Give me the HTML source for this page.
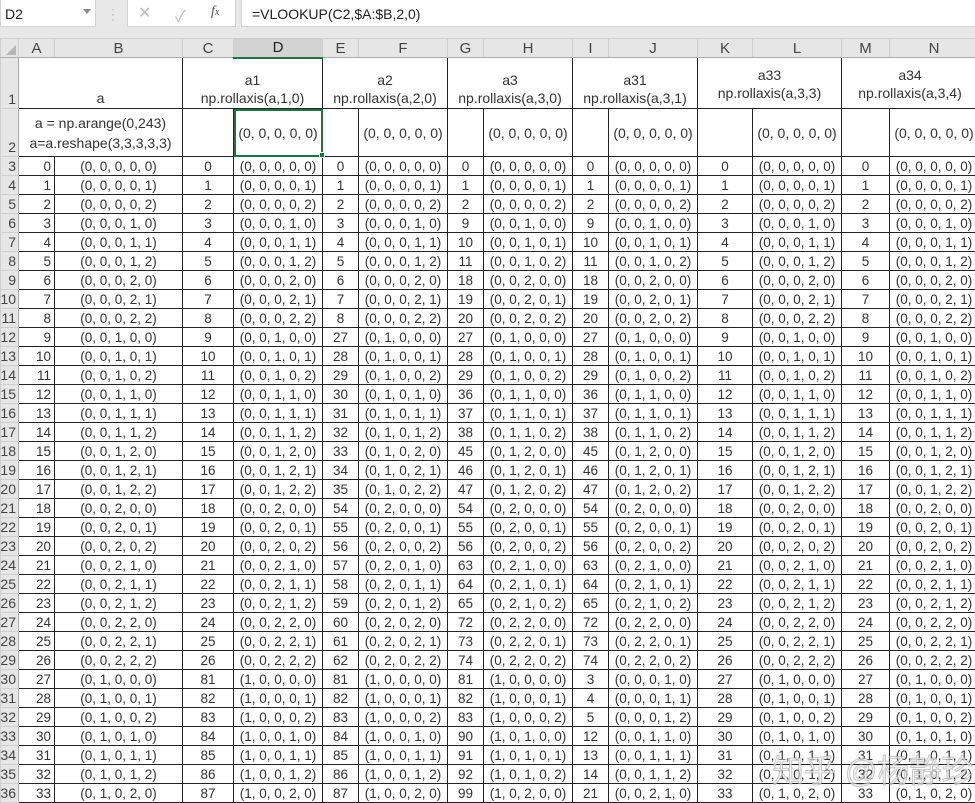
<!DOCTYPE html>
<html><head><meta charset="utf-8"><style>
*{margin:0;padding:0;box-sizing:border-box}
body{width:975px;height:798px;overflow:hidden;background:#e8e8e8;font-family:"Liberation Sans","Noto Sans CJK SC",sans-serif;color:#333;position:relative}
.bar{position:absolute;top:0;left:0;width:975px;height:38px;background:#e8e8e8}
.box{position:absolute;top:0;height:27px;background:#fff;border:1px solid #d4d4d4;border-top:none}
.nb{left:0;width:96px}
.ib{left:127px;width:109px}
.fb{left:241px;width:740px}
.t{position:absolute;font-size:14px;color:#222;top:6px}
table{position:absolute;top:38px;left:0;border-collapse:collapse;table-layout:fixed;width:978px;background:#fff}
td,th{font-size:13.5px;font-weight:normal;white-space:nowrap;overflow:hidden;text-align:center;height:19px;line-height:17px;border:1px solid #222;padding:0}
tr.h th{background:#e6e6e6;border:1px solid #cfcfcf;border-bottom:1px solid #ababab;color:#444;font-size:15px;height:19px}
tr.h th.sel{background:#d3d3d3;border-bottom:2px solid #217346;color:#222}
th.rh{background:#e6e6e6;border:1px solid #cfcfcf;border-right:1px solid #ababab;color:#444;font-size:14px;padding:0}
th.rh span{display:flex;justify-content:flex-end;align-items:flex-end;height:100%;padding-right:2px;overflow:hidden}
td:nth-child(2){text-align:right;padding-right:3px}
tr.r1 td{height:51px;vertical-align:bottom;line-height:18px;padding-bottom:1px;font-size:14px}
tr.r2 td{height:48px;font-size:14px;line-height:20px}
td.d2{outline:2px solid #217346;outline-offset:-2px}
.wm{position:absolute;left:772px;top:746px;font-size:32px;color:rgba(240,240,240,0.7);-webkit-text-stroke:1px rgba(150,150,150,0.5);letter-spacing:0;white-space:nowrap}
</style></head><body>
<div class="bar">
<div class="box nb"><span class="t" style="left:4px">D2</span><span style="position:absolute;left:82px;top:9px;width:0;height:0;border-left:4px solid transparent;border-right:4px solid transparent;border-top:5px solid #888"></span></div>
<span style="position:absolute;left:111px;top:7px;color:#aaa;font-size:12px;line-height:5px">·<br>·<br>·</span>
<div class="box ib"><span class="t" style="left:10px;color:#bbb;font-size:16px;top:3px">✕</span><span class="t" style="left:47px;color:#bbb;font-size:16px;top:3px">✓</span><span class="t" style="left:83px;font-family:'Liberation Serif',serif;font-style:italic;color:#555;top:4px">f<small style="font-size:10px">x</small></span></div>
<div class="box fb"><span class="t" style="left:10px">=VLOOKUP(C2,$A:$B,2,0)</span></div>
</div>
<table>
<colgroup><col style="width:18px"><col style="width:36px"><col style="width:128px"><col style="width:51px"><col style="width:89px"><col style="width:36px"><col style="width:89px"><col style="width:36px"><col style="width:89px"><col style="width:36px"><col style="width:89px"><col style="width:55px"><col style="width:89px"><col style="width:48px"><col style="width:89px"></colgroup>
<tr class="h"><th style="position:relative"><span style="position:absolute;right:2px;bottom:2px;width:0;height:0;border-left:10px solid transparent;border-bottom:10px solid #b5b5b5"></span></th><th>A</th><th>B</th><th>C</th><th class="sel">D</th><th>E</th><th>F</th><th>G</th><th>H</th><th>I</th><th>J</th><th>K</th><th>L</th><th>M</th><th>N</th></tr>
<tr class="r1"><th class="rh"><span>1</span></th><td colspan="2" style="text-align:center;padding-right:0">a</td><td colspan="2">a1<br>np.rollaxis(a,1,0)</td><td colspan="2">a2<br>np.rollaxis(a,2,0)</td><td colspan="2">a3<br>np.rollaxis(a,3,0)</td><td colspan="2">a31<br>np.rollaxis(a,3,1)</td><td colspan="2" style="padding-bottom:6px">a33<br>np.rollaxis(a,3,3)</td><td colspan="2" style="padding-bottom:6px">a34<br>np.rollaxis(a,3,4)</td></tr>
<tr class="r2"><th class="rh"><span>2</span></th><td colspan="2" style="text-align:center;padding-right:0">a = np.arange(0,243)<br>a=a.reshape(3,3,3,3,3)</td><td></td><td class="d2">(0, 0, 0, 0, 0)</td><td></td><td>(0, 0, 0, 0, 0)</td><td></td><td>(0, 0, 0, 0, 0)</td><td></td><td>(0, 0, 0, 0, 0)</td><td></td><td>(0, 0, 0, 0, 0)</td><td></td><td>(0, 0, 0, 0, 0)</td></tr>
<tr><th class="rh"><span>3</span></th><td>0</td><td>(0, 0, 0, 0, 0)</td><td>0</td><td>(0, 0, 0, 0, 0)</td><td>0</td><td>(0, 0, 0, 0, 0)</td><td>0</td><td>(0, 0, 0, 0, 0)</td><td>0</td><td>(0, 0, 0, 0, 0)</td><td>0</td><td>(0, 0, 0, 0, 0)</td><td>0</td><td>(0, 0, 0, 0, 0)</td></tr>
<tr><th class="rh"><span>4</span></th><td>1</td><td>(0, 0, 0, 0, 1)</td><td>1</td><td>(0, 0, 0, 0, 1)</td><td>1</td><td>(0, 0, 0, 0, 1)</td><td>1</td><td>(0, 0, 0, 0, 1)</td><td>1</td><td>(0, 0, 0, 0, 1)</td><td>1</td><td>(0, 0, 0, 0, 1)</td><td>1</td><td>(0, 0, 0, 0, 1)</td></tr>
<tr><th class="rh"><span>5</span></th><td>2</td><td>(0, 0, 0, 0, 2)</td><td>2</td><td>(0, 0, 0, 0, 2)</td><td>2</td><td>(0, 0, 0, 0, 2)</td><td>2</td><td>(0, 0, 0, 0, 2)</td><td>2</td><td>(0, 0, 0, 0, 2)</td><td>2</td><td>(0, 0, 0, 0, 2)</td><td>2</td><td>(0, 0, 0, 0, 2)</td></tr>
<tr><th class="rh"><span>6</span></th><td>3</td><td>(0, 0, 0, 1, 0)</td><td>3</td><td>(0, 0, 0, 1, 0)</td><td>3</td><td>(0, 0, 0, 1, 0)</td><td>9</td><td>(0, 0, 1, 0, 0)</td><td>9</td><td>(0, 0, 1, 0, 0)</td><td>3</td><td>(0, 0, 0, 1, 0)</td><td>3</td><td>(0, 0, 0, 1, 0)</td></tr>
<tr><th class="rh"><span>7</span></th><td>4</td><td>(0, 0, 0, 1, 1)</td><td>4</td><td>(0, 0, 0, 1, 1)</td><td>4</td><td>(0, 0, 0, 1, 1)</td><td>10</td><td>(0, 0, 1, 0, 1)</td><td>10</td><td>(0, 0, 1, 0, 1)</td><td>4</td><td>(0, 0, 0, 1, 1)</td><td>4</td><td>(0, 0, 0, 1, 1)</td></tr>
<tr><th class="rh"><span>8</span></th><td>5</td><td>(0, 0, 0, 1, 2)</td><td>5</td><td>(0, 0, 0, 1, 2)</td><td>5</td><td>(0, 0, 0, 1, 2)</td><td>11</td><td>(0, 0, 1, 0, 2)</td><td>11</td><td>(0, 0, 1, 0, 2)</td><td>5</td><td>(0, 0, 0, 1, 2)</td><td>5</td><td>(0, 0, 0, 1, 2)</td></tr>
<tr><th class="rh"><span>9</span></th><td>6</td><td>(0, 0, 0, 2, 0)</td><td>6</td><td>(0, 0, 0, 2, 0)</td><td>6</td><td>(0, 0, 0, 2, 0)</td><td>18</td><td>(0, 0, 2, 0, 0)</td><td>18</td><td>(0, 0, 2, 0, 0)</td><td>6</td><td>(0, 0, 0, 2, 0)</td><td>6</td><td>(0, 0, 0, 2, 0)</td></tr>
<tr><th class="rh"><span>10</span></th><td>7</td><td>(0, 0, 0, 2, 1)</td><td>7</td><td>(0, 0, 0, 2, 1)</td><td>7</td><td>(0, 0, 0, 2, 1)</td><td>19</td><td>(0, 0, 2, 0, 1)</td><td>19</td><td>(0, 0, 2, 0, 1)</td><td>7</td><td>(0, 0, 0, 2, 1)</td><td>7</td><td>(0, 0, 0, 2, 1)</td></tr>
<tr><th class="rh"><span>11</span></th><td>8</td><td>(0, 0, 0, 2, 2)</td><td>8</td><td>(0, 0, 0, 2, 2)</td><td>8</td><td>(0, 0, 0, 2, 2)</td><td>20</td><td>(0, 0, 2, 0, 2)</td><td>20</td><td>(0, 0, 2, 0, 2)</td><td>8</td><td>(0, 0, 0, 2, 2)</td><td>8</td><td>(0, 0, 0, 2, 2)</td></tr>
<tr><th class="rh"><span>12</span></th><td>9</td><td>(0, 0, 1, 0, 0)</td><td>9</td><td>(0, 0, 1, 0, 0)</td><td>27</td><td>(0, 1, 0, 0, 0)</td><td>27</td><td>(0, 1, 0, 0, 0)</td><td>27</td><td>(0, 1, 0, 0, 0)</td><td>9</td><td>(0, 0, 1, 0, 0)</td><td>9</td><td>(0, 0, 1, 0, 0)</td></tr>
<tr><th class="rh"><span>13</span></th><td>10</td><td>(0, 0, 1, 0, 1)</td><td>10</td><td>(0, 0, 1, 0, 1)</td><td>28</td><td>(0, 1, 0, 0, 1)</td><td>28</td><td>(0, 1, 0, 0, 1)</td><td>28</td><td>(0, 1, 0, 0, 1)</td><td>10</td><td>(0, 0, 1, 0, 1)</td><td>10</td><td>(0, 0, 1, 0, 1)</td></tr>
<tr><th class="rh"><span>14</span></th><td>11</td><td>(0, 0, 1, 0, 2)</td><td>11</td><td>(0, 0, 1, 0, 2)</td><td>29</td><td>(0, 1, 0, 0, 2)</td><td>29</td><td>(0, 1, 0, 0, 2)</td><td>29</td><td>(0, 1, 0, 0, 2)</td><td>11</td><td>(0, 0, 1, 0, 2)</td><td>11</td><td>(0, 0, 1, 0, 2)</td></tr>
<tr><th class="rh"><span>15</span></th><td>12</td><td>(0, 0, 1, 1, 0)</td><td>12</td><td>(0, 0, 1, 1, 0)</td><td>30</td><td>(0, 1, 0, 1, 0)</td><td>36</td><td>(0, 1, 1, 0, 0)</td><td>36</td><td>(0, 1, 1, 0, 0)</td><td>12</td><td>(0, 0, 1, 1, 0)</td><td>12</td><td>(0, 0, 1, 1, 0)</td></tr>
<tr><th class="rh"><span>16</span></th><td>13</td><td>(0, 0, 1, 1, 1)</td><td>13</td><td>(0, 0, 1, 1, 1)</td><td>31</td><td>(0, 1, 0, 1, 1)</td><td>37</td><td>(0, 1, 1, 0, 1)</td><td>37</td><td>(0, 1, 1, 0, 1)</td><td>13</td><td>(0, 0, 1, 1, 1)</td><td>13</td><td>(0, 0, 1, 1, 1)</td></tr>
<tr><th class="rh"><span>17</span></th><td>14</td><td>(0, 0, 1, 1, 2)</td><td>14</td><td>(0, 0, 1, 1, 2)</td><td>32</td><td>(0, 1, 0, 1, 2)</td><td>38</td><td>(0, 1, 1, 0, 2)</td><td>38</td><td>(0, 1, 1, 0, 2)</td><td>14</td><td>(0, 0, 1, 1, 2)</td><td>14</td><td>(0, 0, 1, 1, 2)</td></tr>
<tr><th class="rh"><span>18</span></th><td>15</td><td>(0, 0, 1, 2, 0)</td><td>15</td><td>(0, 0, 1, 2, 0)</td><td>33</td><td>(0, 1, 0, 2, 0)</td><td>45</td><td>(0, 1, 2, 0, 0)</td><td>45</td><td>(0, 1, 2, 0, 0)</td><td>15</td><td>(0, 0, 1, 2, 0)</td><td>15</td><td>(0, 0, 1, 2, 0)</td></tr>
<tr><th class="rh"><span>19</span></th><td>16</td><td>(0, 0, 1, 2, 1)</td><td>16</td><td>(0, 0, 1, 2, 1)</td><td>34</td><td>(0, 1, 0, 2, 1)</td><td>46</td><td>(0, 1, 2, 0, 1)</td><td>46</td><td>(0, 1, 2, 0, 1)</td><td>16</td><td>(0, 0, 1, 2, 1)</td><td>16</td><td>(0, 0, 1, 2, 1)</td></tr>
<tr><th class="rh"><span>20</span></th><td>17</td><td>(0, 0, 1, 2, 2)</td><td>17</td><td>(0, 0, 1, 2, 2)</td><td>35</td><td>(0, 1, 0, 2, 2)</td><td>47</td><td>(0, 1, 2, 0, 2)</td><td>47</td><td>(0, 1, 2, 0, 2)</td><td>17</td><td>(0, 0, 1, 2, 2)</td><td>17</td><td>(0, 0, 1, 2, 2)</td></tr>
<tr><th class="rh"><span>21</span></th><td>18</td><td>(0, 0, 2, 0, 0)</td><td>18</td><td>(0, 0, 2, 0, 0)</td><td>54</td><td>(0, 2, 0, 0, 0)</td><td>54</td><td>(0, 2, 0, 0, 0)</td><td>54</td><td>(0, 2, 0, 0, 0)</td><td>18</td><td>(0, 0, 2, 0, 0)</td><td>18</td><td>(0, 0, 2, 0, 0)</td></tr>
<tr><th class="rh"><span>22</span></th><td>19</td><td>(0, 0, 2, 0, 1)</td><td>19</td><td>(0, 0, 2, 0, 1)</td><td>55</td><td>(0, 2, 0, 0, 1)</td><td>55</td><td>(0, 2, 0, 0, 1)</td><td>55</td><td>(0, 2, 0, 0, 1)</td><td>19</td><td>(0, 0, 2, 0, 1)</td><td>19</td><td>(0, 0, 2, 0, 1)</td></tr>
<tr><th class="rh"><span>23</span></th><td>20</td><td>(0, 0, 2, 0, 2)</td><td>20</td><td>(0, 0, 2, 0, 2)</td><td>56</td><td>(0, 2, 0, 0, 2)</td><td>56</td><td>(0, 2, 0, 0, 2)</td><td>56</td><td>(0, 2, 0, 0, 2)</td><td>20</td><td>(0, 0, 2, 0, 2)</td><td>20</td><td>(0, 0, 2, 0, 2)</td></tr>
<tr><th class="rh"><span>24</span></th><td>21</td><td>(0, 0, 2, 1, 0)</td><td>21</td><td>(0, 0, 2, 1, 0)</td><td>57</td><td>(0, 2, 0, 1, 0)</td><td>63</td><td>(0, 2, 1, 0, 0)</td><td>63</td><td>(0, 2, 1, 0, 0)</td><td>21</td><td>(0, 0, 2, 1, 0)</td><td>21</td><td>(0, 0, 2, 1, 0)</td></tr>
<tr><th class="rh"><span>25</span></th><td>22</td><td>(0, 0, 2, 1, 1)</td><td>22</td><td>(0, 0, 2, 1, 1)</td><td>58</td><td>(0, 2, 0, 1, 1)</td><td>64</td><td>(0, 2, 1, 0, 1)</td><td>64</td><td>(0, 2, 1, 0, 1)</td><td>22</td><td>(0, 0, 2, 1, 1)</td><td>22</td><td>(0, 0, 2, 1, 1)</td></tr>
<tr><th class="rh"><span>26</span></th><td>23</td><td>(0, 0, 2, 1, 2)</td><td>23</td><td>(0, 0, 2, 1, 2)</td><td>59</td><td>(0, 2, 0, 1, 2)</td><td>65</td><td>(0, 2, 1, 0, 2)</td><td>65</td><td>(0, 2, 1, 0, 2)</td><td>23</td><td>(0, 0, 2, 1, 2)</td><td>23</td><td>(0, 0, 2, 1, 2)</td></tr>
<tr><th class="rh"><span>27</span></th><td>24</td><td>(0, 0, 2, 2, 0)</td><td>24</td><td>(0, 0, 2, 2, 0)</td><td>60</td><td>(0, 2, 0, 2, 0)</td><td>72</td><td>(0, 2, 2, 0, 0)</td><td>72</td><td>(0, 2, 2, 0, 0)</td><td>24</td><td>(0, 0, 2, 2, 0)</td><td>24</td><td>(0, 0, 2, 2, 0)</td></tr>
<tr><th class="rh"><span>28</span></th><td>25</td><td>(0, 0, 2, 2, 1)</td><td>25</td><td>(0, 0, 2, 2, 1)</td><td>61</td><td>(0, 2, 0, 2, 1)</td><td>73</td><td>(0, 2, 2, 0, 1)</td><td>73</td><td>(0, 2, 2, 0, 1)</td><td>25</td><td>(0, 0, 2, 2, 1)</td><td>25</td><td>(0, 0, 2, 2, 1)</td></tr>
<tr><th class="rh"><span>29</span></th><td>26</td><td>(0, 0, 2, 2, 2)</td><td>26</td><td>(0, 0, 2, 2, 2)</td><td>62</td><td>(0, 2, 0, 2, 2)</td><td>74</td><td>(0, 2, 2, 0, 2)</td><td>74</td><td>(0, 2, 2, 0, 2)</td><td>26</td><td>(0, 0, 2, 2, 2)</td><td>26</td><td>(0, 0, 2, 2, 2)</td></tr>
<tr><th class="rh"><span>30</span></th><td>27</td><td>(0, 1, 0, 0, 0)</td><td>81</td><td>(1, 0, 0, 0, 0)</td><td>81</td><td>(1, 0, 0, 0, 0)</td><td>81</td><td>(1, 0, 0, 0, 0)</td><td>3</td><td>(0, 0, 0, 1, 0)</td><td>27</td><td>(0, 1, 0, 0, 0)</td><td>27</td><td>(0, 1, 0, 0, 0)</td></tr>
<tr><th class="rh"><span>31</span></th><td>28</td><td>(0, 1, 0, 0, 1)</td><td>82</td><td>(1, 0, 0, 0, 1)</td><td>82</td><td>(1, 0, 0, 0, 1)</td><td>82</td><td>(1, 0, 0, 0, 1)</td><td>4</td><td>(0, 0, 0, 1, 1)</td><td>28</td><td>(0, 1, 0, 0, 1)</td><td>28</td><td>(0, 1, 0, 0, 1)</td></tr>
<tr><th class="rh"><span>32</span></th><td>29</td><td>(0, 1, 0, 0, 2)</td><td>83</td><td>(1, 0, 0, 0, 2)</td><td>83</td><td>(1, 0, 0, 0, 2)</td><td>83</td><td>(1, 0, 0, 0, 2)</td><td>5</td><td>(0, 0, 0, 1, 2)</td><td>29</td><td>(0, 1, 0, 0, 2)</td><td>29</td><td>(0, 1, 0, 0, 2)</td></tr>
<tr><th class="rh"><span>33</span></th><td>30</td><td>(0, 1, 0, 1, 0)</td><td>84</td><td>(1, 0, 0, 1, 0)</td><td>84</td><td>(1, 0, 0, 1, 0)</td><td>90</td><td>(1, 0, 1, 0, 0)</td><td>12</td><td>(0, 0, 1, 1, 0)</td><td>30</td><td>(0, 1, 0, 1, 0)</td><td>30</td><td>(0, 1, 0, 1, 0)</td></tr>
<tr><th class="rh"><span>34</span></th><td>31</td><td>(0, 1, 0, 1, 1)</td><td>85</td><td>(1, 0, 0, 1, 1)</td><td>85</td><td>(1, 0, 0, 1, 1)</td><td>91</td><td>(1, 0, 1, 0, 1)</td><td>13</td><td>(0, 0, 1, 1, 1)</td><td>31</td><td>(0, 1, 0, 1, 1)</td><td>31</td><td>(0, 1, 0, 1, 1)</td></tr>
<tr><th class="rh"><span>35</span></th><td>32</td><td>(0, 1, 0, 1, 2)</td><td>86</td><td>(1, 0, 0, 1, 2)</td><td>86</td><td>(1, 0, 0, 1, 2)</td><td>92</td><td>(1, 0, 1, 0, 2)</td><td>14</td><td>(0, 0, 1, 1, 2)</td><td>32</td><td>(0, 1, 0, 1, 2)</td><td>32</td><td>(0, 1, 0, 1, 2)</td></tr>
<tr><th class="rh"><span>36</span></th><td>33</td><td>(0, 1, 0, 2, 0)</td><td>87</td><td>(1, 0, 0, 2, 0)</td><td>87</td><td>(1, 0, 0, 2, 0)</td><td>99</td><td>(1, 0, 2, 0, 0)</td><td>21</td><td>(0, 0, 2, 1, 0)</td><td>33</td><td>(0, 1, 0, 2, 0)</td><td>33</td><td>(0, 1, 0, 2, 0)</td></tr>
</table>
<div style="position:absolute;left:968px;top:45px;width:7px;height:8px;background:#e6e6e6"></div>
<div style="position:absolute;left:319px;top:152px;width:6px;height:6px;background:#217346;border:1px solid #fff"></div>
<div class="wm">知乎 @杨静珍</div>
</body></html>
